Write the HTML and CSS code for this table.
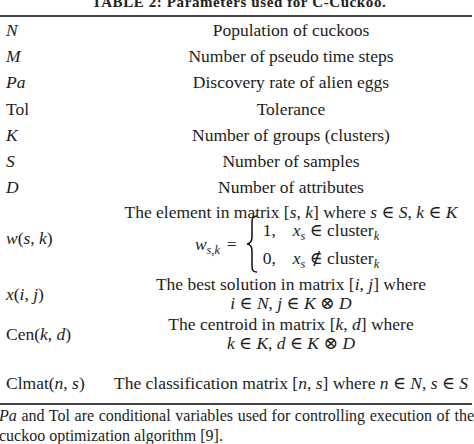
FILE: index.html
```html
<!DOCTYPE html>
<html>
<head>
<meta charset="utf-8">
<link rel="stylesheet" href="styles.css">
</head>
<body>
<div class="page">
  <div class="caption">TABLE 2: Parameters used for C-Cuckoo.</div>
  <div class="table">
    <svg class="rule-svg" width="472" height="2" viewBox="0 0 472 2"><rect x="0" y="0" width="472" height="2" fill="#444"/></svg>
    <div class="row"><div class="sym"><i>N</i></div><div class="desc">Population of cuckoos</div></div>
    <div class="row"><div class="sym"><i>M</i></div><div class="desc">Number of pseudo time steps</div></div>
    <div class="row"><div class="sym"><i>Pa</i></div><div class="desc">Discovery rate of alien eggs</div></div>
    <div class="row"><div class="sym">Tol</div><div class="desc">Tolerance</div></div>
    <div class="row"><div class="sym"><i>K</i></div><div class="desc">Number of groups (clusters)</div></div>
    <div class="row"><div class="sym"><i>S</i></div><div class="desc">Number of samples</div></div>
    <div class="row"><div class="sym"><i>D</i></div><div class="desc">Number of attributes</div></div>
    <div class="row tall"><div class="sym sym-w"><i>w</i>(<i>s</i>, <i>k</i>)</div>
      <div class="desc">
        <div class="line">The element in matrix [<i>s</i>, <i>k</i>] where <i>s</i> ∈ <i>S</i>, <i>k</i> ∈ <i>K</i></div>
        <div class="cases">
          <span class="lhs"><i>w</i><sub><i>s</i>,<i>k</i></sub></span>
          <span class="eq">=</span>
          <svg class="brace" width="12" height="58" viewBox="0 0 12 58"><path d="M11 1 C6.5 1 6 3 6 8 L6 22 C6 26 4.5 28.5 1 29 C4.5 29.5 6 32 6 36 L6 50 C6 55 6.5 57 11 57" fill="none" stroke="#1c1c1c" stroke-width="1.6"/></svg>
          <span class="alts">
            <span class="alt"><span class="val">1,</span><span><i>x</i><sub><i>s</i></sub> ∈ cluster<sub><i>k</i></sub></span></span>
            <span class="alt"><span class="val">0,</span><span><i>x</i><sub><i>s</i></sub> ∉ cluster<sub><i>k</i></sub></span></span>
          </span>
        </div>
      </div>
    </div>
    <div class="row two"><div class="sym"><i>x</i>(<i>i</i>, <i>j</i>)</div>
      <div class="desc"><div class="line">The best solution in matrix [<i>i</i>, <i>j</i>] where</div><div class="line"><i>i</i> ∈ <i>N</i>, <i>j</i> ∈ <i>K</i> ⊗ <i>D</i></div></div></div>
    <div class="row two"><div class="sym">Cen(<i>k</i>, <i>d</i>)</div>
      <div class="desc"><div class="line">The centroid in matrix [<i>k</i>, <i>d</i>] where</div><div class="line"><i>k</i> ∈ <i>K</i>, <i>d</i> ∈ <i>K</i> ⊗ <i>D</i></div></div></div>
    <div class="row last"><div class="sym">Clmat(<i>n</i>, <i>s</i>)</div><div class="desc">The classification matrix [<i>n</i>, <i>s</i>] where <i>n</i> ∈ <i>N</i>, <i>s</i> ∈ <i>S</i></div></div>
    <svg class="rule-svg" width="472" height="2" viewBox="0 0 472 2"><rect x="0" y="0" width="472" height="2" fill="#444"/></svg>
  </div>
  <p class="note"><i>Pa</i> and Tol are conditional variables used for controlling execution of the cuckoo optimization algorithm [9].</p>
</div>
</body>
</html>
```

FILE: styles.css
```css
html, body {
  margin: 0;
  padding: 0;
  background: #ffffff;
}
body {
  font-family: "Liberation Serif", "DejaVu Serif", serif;
  color: #1c1c1c;
  overflow: hidden;
}
.page {
  width: 474px;
}
.caption {
  height: 12px;
  line-height: 4px;
  font-size: 15px;
  font-weight: bold;
  text-align: center;
  letter-spacing: 0.6px;
  padding-left: 4px;
  color: #222;
}
.rule-svg {
  display: block;
}
.table {
  margin-top: 3px;
  width: 472px;
  font-size: 17.5px;
}
.row {
  display: grid;
  grid-template-columns: 110px 1fr;
  align-items: center;
  height: 26.3px;
}
.sym {
  padding-left: 6px;
  white-space: nowrap;
}
.desc {
  text-align: center;
  white-space: nowrap;
}
.line {
  line-height: 19px;
}
.tall {
  height: 73px;
  align-items: start;
}
.tall .line {
  margin-top: 2px;
}
.sym-w {
  margin-top: 27px;
}
.cases {
  display: flex;
  align-items: center;
  justify-content: center;
  margin-top: -7px;
  padding-right: 8px;
}
.lhs {
  margin-right: 7px;
}
.eq {
  margin-right: 9px;
}
.brace {
  display: block;
  margin-right: 5px;
}
.alts {
  display: flex;
  flex-direction: column;
  gap: 8px;
  text-align: left;
  line-height: 20px;
}
.alt {
  display: flex;
}
.val {
  width: 30px;
}
sub {
  font-size: 70%;
  vertical-align: -4px;
  line-height: 0;
}
.two {
  height: 40px;
}
.last {
  height: 49px;
  align-items: end;
  padding-bottom: 9px;
  box-sizing: border-box;
}
.note {
  margin: 1px 0 0 -1px;
  width: 475px;
  font-size: 16px;
  line-height: 20px;
  text-align: justify;
}
```
